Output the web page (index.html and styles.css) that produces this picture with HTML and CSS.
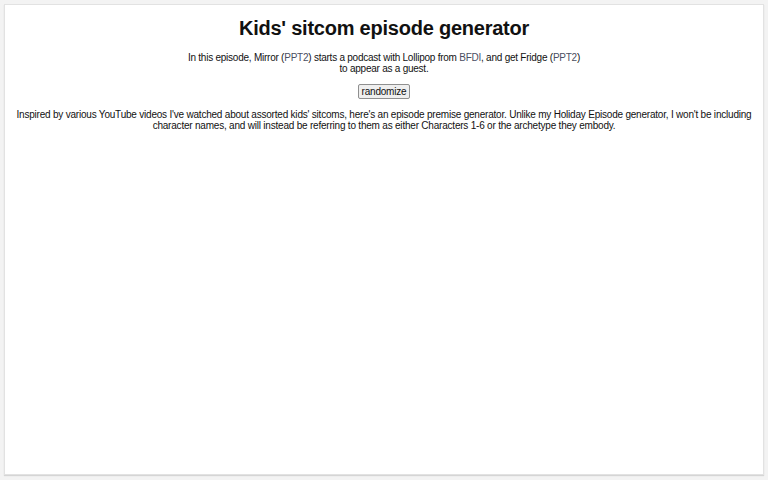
FILE: index.html
```html
<!DOCTYPE html>
<html lang="en">
<head>
<meta charset="utf-8">
<title>Kids' sitcom episode generator</title>
<link rel="stylesheet" href="styles.css">
</head>
<body>
<main class="card">
  <h1 class="title">Kids' sitcom episode generator</h1>
  <p class="episode">In this episode, Mirror (<a class="show" href="#">PPT2</a>) starts a podcast with Lollipop from <a class="show" href="#">BFDI</a>, and get Fridge (<a class="show" href="#">PPT2</a>) to appear as a guest.</p>
  <button class="randomize" type="button">randomize</button>
  <p class="intro">Inspired by various YouTube videos I've watched about assorted kids' sitcoms, here's an episode premise generator. Unlike my Holiday Episode generator, I won't be including character names, and will instead be referring to them as either Characters 1-6 or the archetype they embody.</p>
</main>
</body>
</html>
```
FILE: styles.css
```css
html, body {
  height: 100%;
}

body {
  margin: 0;
  padding: 4px 4px 5px 4px;
  box-sizing: border-box;
  background: #f3f3f3;
  font-family: "Liberation Sans", Arial, sans-serif;
  color: #111;
}

.card {
  height: 100%;
  box-sizing: border-box;
  background: #fff;
  border: 1px solid #e2e2e2;
  box-shadow: 0 1px 1px rgba(0, 0, 0, 0.12);
  display: flex;
  flex-direction: column;
  align-items: center;
  padding: 11px 10px 0;
  text-align: center;
}

.title {
  margin: 0;
  font-size: 20px;
  line-height: 24px;
  font-weight: bold;
  letter-spacing: -0.23px;
}

.episode {
  margin: 12px 0 0;
  max-width: 400px;
  font-size: 10px;
  line-height: 11px;
  letter-spacing: -0.24px;
}

.show {
  color: #4b4f63;
  text-decoration: none;
}

.randomize {
  margin-top: 10px;
  height: 15px;
  box-sizing: border-box;
  font-family: inherit;
  font-size: 10px;
  line-height: 12px;
  letter-spacing: -0.2px;
  padding: 0 3px;
  background: #efefef;
  border: 1px solid #8f8f8f;
  border-radius: 2px;
  color: #111;
}

.intro {
  margin: 10px 0 0;
  font-size: 10px;
  line-height: 11px;
  letter-spacing: -0.21px;
}
```
